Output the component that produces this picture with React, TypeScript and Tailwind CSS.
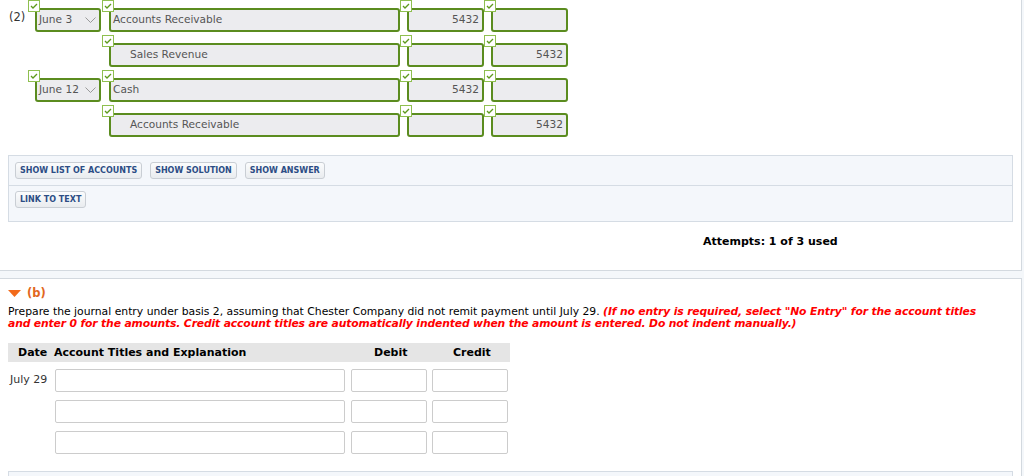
import React from "react";

const font = { fontFamily: '"DejaVu Sans", Verdana, sans-serif' };

const Check = () => (
  <span className="absolute -left-[7px] -top-[8px] z-10 flex h-[12px] w-[12px] items-center justify-center border border-[#8fbf50] bg-white">
    <svg width="8" height="6" viewBox="0 0 8 6" fill="none">
      <path d="M1 3 L3 5 L7 1" stroke="#5e9a1c" strokeWidth="1.3" />
    </svg>
  </span>
);

const Cell = ({
  w,
  text,
  align = "left",
  indent = false,
  select = false,
}: {
  w: string;
  text?: string;
  align?: "left" | "right";
  indent?: boolean;
  select?: boolean;
}) => (
  <div className={`relative h-[24px] ${w}`}>
    <Check />
    <div
      className={`flex h-full items-center rounded-[3px] border-2 border-[#5b8c1f] bg-[#ececef] text-[10.6px] text-[#555] ${
        align === "right" ? "justify-end pr-[3px]" : indent ? "pl-[19px]" : "pl-[2px]"
      }`}
    >
      <span className="flex-1 whitespace-nowrap" style={{ textAlign: align }}>
        {text}
      </span>
      {select && (
        <svg width="11" height="7" viewBox="0 0 11 7" className="mr-[3px]">
          <path d="M0.5 0.5 L5.5 5.5 L10.5 0.5" stroke="#999" fill="none" />
        </svg>
      )}
    </div>
  </div>
);

type Row = { date?: string; account: string; debit?: string; credit?: string; label?: string };

const rows: Row[] = [
  { label: "(2)", date: "June 3", account: "Accounts Receivable", debit: "5432" },
  { account: "Sales Revenue", credit: "5432" },
  { date: "June 12", account: "Cash", debit: "5432" },
  { account: "Accounts Receivable", credit: "5432" },
];

const Btn = ({ children }: { children: React.ReactNode }) => (
  <button className="h-[17px] rounded-[3px] border border-[#c9ced4] bg-gradient-to-b from-[#fbfcfd] to-[#e9ecef] px-[4px] text-[8px] font-bold leading-none text-[#2c4d85]">
    {children}
  </button>
);

const Input = ({ w }: { w: string }) => (
  <div className={`h-[23px] ${w} rounded-[2px] border border-[#cccccc] bg-white`} />
);

export default function App() {
  return (
    <div className="h-[476px] w-[1024px] overflow-hidden bg-[#f4f7fa] text-black" style={font}>
      <div className="w-[1022px] border-b border-r border-[#d3d9df] bg-white pb-[21px]">
        <div className="flex flex-col gap-[11px] pt-[8px]">
          {rows.map((r, i) => (
            <div key={i} className="flex items-center">
              <div className="-mt-[4px] w-[35px] pl-[9px] text-[11.5px] text-[#333]">{r.label}</div>
              {r.date ? <Cell w="w-[66px]" text={r.date} select /> : <div className="w-[66px]" />}
              <div className="w-[8px]" />
              <Cell w="w-[291px]" text={r.account} indent={!r.date} />
              <div className="w-[7px]" />
              <Cell w="w-[77px]" text={r.debit} align="right" />
              <div className="w-[7px]" />
              <Cell w="w-[77px]" text={r.credit} align="right" />
            </div>
          ))}
        </div>

        <div className="ml-[8px] mt-[18px] w-[1005px] border border-[#d5dce4] bg-[#f4f7fb]">
          <div className="flex h-[30px] items-center gap-[8px] border-b border-[#d5dce4] px-[6px]">
            <Btn>SHOW LIST OF ACCOUNTS</Btn>
            <Btn>SHOW SOLUTION</Btn>
            <Btn>SHOW ANSWER</Btn>
          </div>
          <div className="flex h-[35px] items-start px-[6px] pt-[5px]">
            <Btn>LINK TO TEXT</Btn>
          </div>
        </div>

        <div className="mt-[14px] flex h-[13px] items-center pl-[703px] text-[11px] font-bold">
          Attempts: 1 of 3 used
        </div>
      </div>

      <div className="mt-[7px] h-[300px] w-[1022px] border-r border-t border-[#d3d9df] bg-white px-[8px] pt-[6px]">
        <div className="flex items-center gap-[6px] text-[11.5px] font-bold text-[#e2671f]">
          <svg width="13" height="8" viewBox="0 0 13 8">
            <path d="M0 0 L13 0 L6.5 7 Z" fill="#f26a1b" />
          </svg>
          <span>(b)</span>
        </div>
        <p className="mt-[4px] w-[982px] text-[10.8px] leading-[12px] text-black">
          Prepare the journal entry under basis 2, assuming that Chester Company did not remit payment until July 29.{" "}
          <span className="font-bold italic tracking-[-0.15px] text-[#ff0000]">
            (If no entry is required, select "No Entry" for the account titles and enter 0 for the amounts. Credit account titles are automatically indented when the amount is entered. Do not indent manually.)
          </span>
        </p>

        <div className="mt-[13px] w-[502px]">
          <div className="flex h-[19px] items-center bg-[#e5e5e5] text-[11px] font-bold">
            <div className="w-[46px] pl-[10px]">Date</div>
            <div className="w-[297px]">Account Titles and Explanation</div>
            <div className="w-[80px] pl-[23px]">Debit</div>
            <div className="pl-[22px]">Credit</div>
          </div>
          <div className="mt-[7px] flex flex-col gap-[8px]">
            {[0, 1, 2].map((i) => (
              <div key={i} className="flex items-start">
                <div className="w-[47px] pl-[2px] pt-[3px] text-[11px] text-[#333]">{i === 0 ? "July 29" : ""}</div>
                <Input w="w-[290px]" />
                <div className="w-[6px]" />
                <Input w="w-[76px]" />
                <div className="w-[5px]" />
                <Input w="w-[76px]" />
              </div>
            ))}
          </div>
        </div>

        <div className="mt-[17px] h-[20px] w-[1005px] border border-[#d5dce4] bg-[#f4f7fb]" />
      </div>
    </div>
  );
}
